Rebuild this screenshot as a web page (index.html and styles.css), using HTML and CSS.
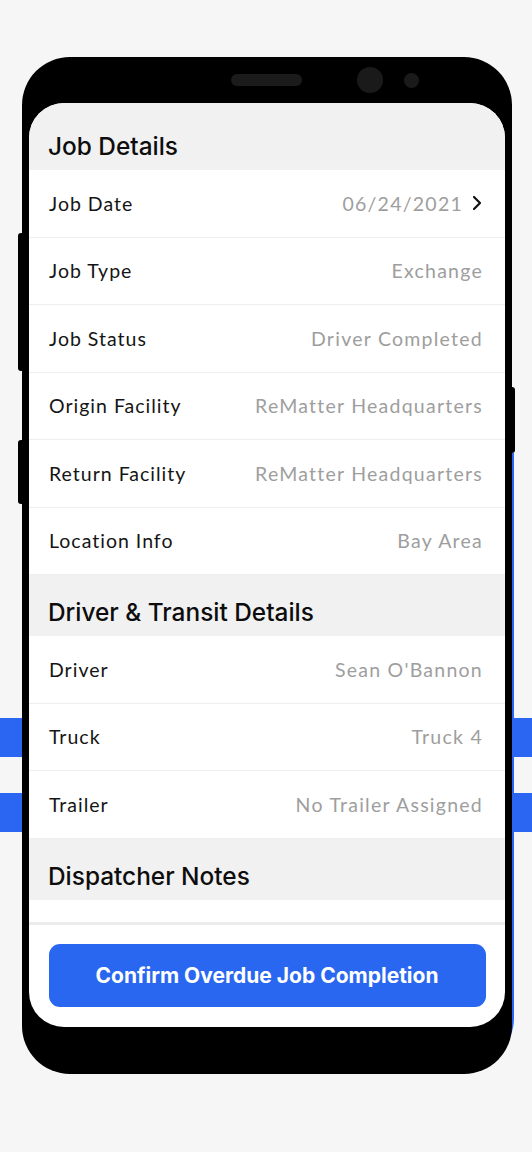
FILE: index.html
```html
<!DOCTYPE html>
<html>
<head>
<meta charset="utf-8">
<link rel="stylesheet" href="styles.css">
</head>
<body>
<div class="stage">
  <div class="phone">
    <span class="side-btn side-left-1"></span>
    <span class="side-btn side-left-2"></span>
    <span class="side-btn side-right"></span>
    <div class="top-bar">
      <span class="speaker"></span>
      <span class="camera"></span>
      <span class="sensor"></span>
    </div>
    <div class="screen">
      <div class="section-head first">Job Details</div>
      <div class="row"><span class="label">Job Date</span><span class="value">06/24/2021<svg class="chev" width="12" height="18" viewBox="0 0 12 18"><path d="M3 3 L9 9 L3 15" fill="none" stroke="#111" stroke-width="2.2" stroke-linecap="round" stroke-linejoin="round"/></svg></span></div>
      <div class="row"><span class="label">Job Type</span><span class="value">Exchange</span></div>
      <div class="row"><span class="label">Job Status</span><span class="value">Driver Completed</span></div>
      <div class="row"><span class="label">Origin Facility</span><span class="value">ReMatter Headquarters</span></div>
      <div class="row"><span class="label">Return Facility</span><span class="value">ReMatter Headquarters</span></div>
      <div class="row"><span class="label">Location Info</span><span class="value">Bay Area</span></div>
      <div class="section-head">Driver &amp; Transit Details</div>
      <div class="row"><span class="label">Driver</span><span class="value">Sean O'Bannon</span></div>
      <div class="row"><span class="label">Truck</span><span class="value">Truck 4</span></div>
      <div class="row"><span class="label">Trailer</span><span class="value">No Trailer Assigned</span></div>
      <div class="section-head">Dispatcher Notes</div>
      <div class="notes"></div>
      <div class="footer">
        <button class="confirm">Confirm Overdue Job Completion</button>
      </div>
    </div>
  </div>
</div>
</body>
</html>
```

FILE: styles.css
```css
html, body {
  margin: 0;
  padding: 0;
}
body {
  width: 532px;
  height: 1152px;
  overflow: hidden;
  background-color: #f6f6f7;
  background-image: linear-gradient(to bottom,
    transparent 0, transparent 718px,
    #2b66f2 718px, #2b66f2 757px,
    transparent 757px, transparent 793px,
    #2b66f2 793px, #2b66f2 832px,
    transparent 832px);
  background-repeat: no-repeat;
  background-size: 100% 1152px;
  font-family: "Inter", "Noto Sans", sans-serif;
}
.stage {
  padding: 57px 0 0 22px;
}
.phone {
  position: relative;
  width: 490px;
  box-sizing: border-box;
  background: #000;
  border-radius: 48px;
  padding: 0 7px 47px 7px;
}
.phone::before {
  content: "";
  position: absolute;
  z-index: -1;
  top: 396px;
  right: -2px;
  bottom: 8px;
  width: 80px;
  border-radius: 0 0 48px 0;
  background: #2b66f2;
}
.side-btn {
  position: absolute;
  width: 5px;
  background: #000;
}
.side-left-1 { left: -4px; top: 176px; height: 138px; border-radius: 3px 0 0 3px; }
.side-left-2 { left: -4px; top: 383px; height: 64px; border-radius: 3px 0 0 3px; }
.side-right { right: -3px; top: 330px; height: 66px; border-radius: 0 3px 3px 0; }
.top-bar {
  height: 46px;
  display: flex;
  align-items: center;
}
.speaker {
  margin-left: 202px;
  width: 71px;
  height: 12px;
  border-radius: 6px;
  background: #1b1b1b;
}
.camera {
  margin-left: 55px;
  width: 26px;
  height: 26px;
  border-radius: 50%;
  background: #1a1a1a;
}
.sensor {
  margin-left: 21px;
  width: 15px;
  height: 15px;
  border-radius: 50%;
  background: #1a1a1a;
}
.screen {
  background: #fff;
  border-radius: 35px;
  overflow: hidden;
  height: 924px;
  display: flex;
  flex-direction: column;
}
.section-head {
  flex: none;
  height: 61px;
  box-sizing: border-box;
  background: #f1f1f1;
  display: flex;
  align-items: flex-end;
  padding: 0 0 10px 19px;
  font-size: 24.4px;
  line-height: 28px;
  font-weight: 500;
  color: #0d0d0d;
}
.section-head.first {
  height: 67px;
}
.row {
  flex: none;
  height: 67.5px;
  box-sizing: border-box;
  border-bottom: 1px solid #eeeeee;
  display: flex;
  align-items: center;
  justify-content: space-between;
  padding: 0 22px 0 20px;
  font-family: "Lato", "Noto Sans", sans-serif;
  font-size: 19.5px;
}
.label {
  color: #151515;
  letter-spacing: 1px;
}
.value {
  color: #9e9e9e;
  letter-spacing: 1.25px;
  display: flex;
  align-items: center;
}
.chev {
  margin-left: 8px;
}
.notes {
  flex: none;
  height: 22px;
  border-bottom: 3px solid #ececec;
}
.footer {
  flex: 1;
  display: flex;
  align-items: flex-start;
  justify-content: center;
  padding-top: 19px;
}
.confirm {
  width: 437px;
  height: 63px;
  border: none;
  border-radius: 11px;
  background: #2a67f1;
  color: #fff;
  font-family: "Inter", "Noto Sans", sans-serif;
  font-size: 21px;
  font-weight: 700;
  padding: 0;
}
```
